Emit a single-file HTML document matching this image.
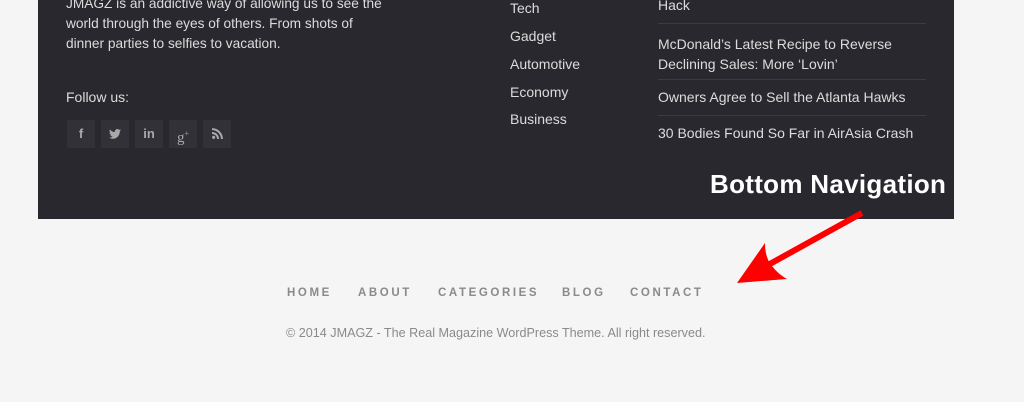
<!DOCTYPE html>
<html><head><meta charset="utf-8"><style>
body{margin:0;width:1024px;height:402px;background:#f5f5f5;position:relative;overflow:hidden;font-family:"Liberation Sans",sans-serif;}
.dark{position:absolute;left:38px;top:0;width:916px;height:219px;background:#29282e;}
.t{position:absolute;color:#dcdcdc;font-size:14px;white-space:nowrap;}
.sep{position:absolute;left:658px;width:268px;height:1px;background:#3c3b42;}
.ic{position:absolute;top:120px;width:28px;height:28px;background:#323138;color:#a9a9a9;font-size:13px;font-weight:bold;text-align:center;line-height:28px;}
.nav{position:absolute;top:287px;color:#8a8a8a;font-size:11.5px;font-weight:bold;letter-spacing:2.6px;}
</style></head><body>
<div class="dark"></div>
<div class="t" style="left:66px;top:-6px;line-height:20px;font-size:13.7px">JMAGZ is an addictive way of allowing us to see the<br>world through the eyes of others. From shots of<br>dinner parties to selfies to vacation.</div>
<div class="t" style="left:66px;top:89px">Follow us:</div>
<div class="ic" style="left:67px">f</div>
<div class="ic" style="left:101px"><svg width="12" height="10" viewBox="0 0 24 20" style="vertical-align:-1px"><path fill="#a9a9a9" d="M24 2.4a10 10 0 0 1-2.8.8A5 5 0 0 0 23.3.5a10 10 0 0 1-3.1 1.2A4.9 4.9 0 0 0 11.8 6 14 14 0 0 1 1.7.9a4.9 4.9 0 0 0 1.5 6.6A4.900 4.9 0 0 1 1 6.9a4.9 4.9 0 0 0 3.9 4.8 5 5 0 0 1-2.2.1 4.9 4.9 0 0 0 4.6 3.4A9.900 9.9 0 0 1 0 17.3 14 14 0 0 0 7.5 19.5c9.100 0 14-7.500 14-14v-.6A10 10 0 0 0 24 2.4z"/></svg></div>
<div class="ic" style="left:135px">in</div>
<div class="ic" style="left:169px;font-family:'Liberation Serif',serif;font-weight:normal;font-size:15px">g<sup style="font-size:8px">+</sup></div>
<div class="ic" style="left:203px"><svg width="11" height="11" viewBox="0 0 10 10" style="vertical-align:-1px"><circle cx="1.5" cy="8.5" r="1.4" fill="#a9a9a9"/><path d="M0 4.5a5.5 5.5 0 0 1 5.5 5.5M0 1a9 9 0 0 1 9 9" stroke="#a9a9a9" stroke-width="1.8" fill="none"/></svg></div>
<div class="t" style="left:510px;top:0px">Tech</div>
<div class="t" style="left:510px;top:28px">Gadget</div>
<div class="t" style="left:510px;top:56px">Automotive</div>
<div class="t" style="left:510px;top:84px">Economy</div>
<div class="t" style="left:510px;top:111px">Business</div>
<div class="t" style="left:658px;top:-3px">Hack</div>
<div class="sep" style="top:23px"></div>
<div class="t" style="left:658px;top:34px;line-height:20px">McDonald’s Latest Recipe to Reverse<br>Declining Sales: More ‘Lovin’</div>
<div class="sep" style="top:79px"></div>
<div class="t" style="left:658px;top:89px">Owners Agree to Sell the Atlanta Hawks</div>
<div class="sep" style="top:115px"></div>
<div class="t" style="left:658px;top:125px">30 Bodies Found So Far in AirAsia Crash</div>
<div style="position:absolute;left:710px;top:169px;color:#fff;font-size:26px;font-weight:bold;white-space:nowrap;letter-spacing:0.3px">Bottom Navigation</div>
<svg style="position:absolute;left:0;top:0" width="1024" height="402"><path d="M862 213 L768 265" stroke="#f00" stroke-width="6"/><path d="M737 283 L765 243 Q765 258 772 266 Q778 274 787 279 Z" fill="#f00"/></svg>
<div class="nav" style="left:287px">HOME</div>
<div class="nav" style="left:358px">ABOUT</div>
<div class="nav" style="left:438px">CATEGORIES</div>
<div class="nav" style="left:562px">BLOG</div>
<div class="nav" style="left:630px">CONTACT</div>
<div style="position:absolute;left:286px;top:326px;color:#8a8a8a;font-size:12.6px;white-space:nowrap">© 2014 JMAGZ - The Real Magazine WordPress Theme. All right reserved.</div>
</body></html>
